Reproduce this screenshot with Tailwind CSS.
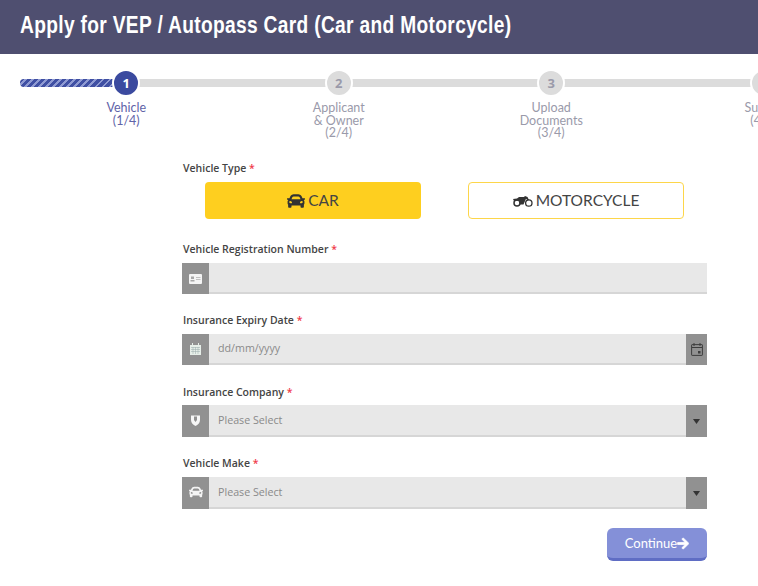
<!DOCTYPE html>
<html lang="en">
  <head>
    <meta charset="UTF-8" />
    <meta name="viewport" content="width=device-width, initial-scale=1.0" />
    <title>Apply for VEP / Autopass Card</title>
    <script src="https://cdn.jsdelivr.net/npm/@tailwindcss/browser@4"></script>
  </head>
  <body class="bg-white h-[586px] overflow-hidden font-['Open_Sans',sans-serif]">
    <!-- Title bar -->
    <header class="h-[54px] bg-[#4f4f70] pl-5 flex items-center">
      <h1 class="text-[23px] font-bold text-white whitespace-nowrap origin-left scale-x-[0.833] font-['Liberation_Sans',sans-serif] tracking-[0.4px] -mt-[4px]">Apply for VEP / Autopass Card (Car and Motorcycle)</h1>
    </header>

    <!-- Stepper -->
    <div class="relative ml-5 mt-[17px] w-[850px] h-[90px] font-['Lato',sans-serif] text-[12.5px] leading-[12.5px]">
      <div class="absolute left-0 right-0 top-[8px] h-2 rounded-full bg-[#dcdcdc]"></div>
      <div class="absolute left-0 top-[8px] w-[94px] h-2 rounded-l-full bg-[repeating-linear-gradient(135deg,#3f4fa3_0,#3f4fa3_3px,#8f9ad2_3px,#8f9ad2_5px)]"></div>
      <div class="relative grid grid-cols-4 text-center text-[#9a9aaa]">
        <div class="flex flex-col items-center text-[#5f63a8]">
          <span class="w-7 h-7 -mt-0.5 rounded-full border-2 border-white bg-[#3b4a9f] text-white text-[13px] font-bold font-['Open_Sans',sans-serif] flex items-center justify-center">1</span>
          <span class="mt-[5px]">Vehicle<br />(1/4)</span>
        </div>
        <div class="flex flex-col items-center">
          <span class="w-7 h-7 -mt-0.5 rounded-full border-2 border-white bg-[#dcdcdc] text-[#9a9aaa] text-[13px] font-bold font-['Open_Sans',sans-serif] flex items-center justify-center">2</span>
          <span class="mt-[5px]">Applicant<br />&amp; Owner<br />(2/4)</span>
        </div>
        <div class="flex flex-col items-center">
          <span class="w-7 h-7 -mt-0.5 rounded-full border-2 border-white bg-[#dcdcdc] text-[#9a9aaa] text-[13px] font-bold font-['Open_Sans',sans-serif] flex items-center justify-center">3</span>
          <span class="mt-[5px]">Upload<br />Documents<br />(3/4)</span>
        </div>
        <div class="flex flex-col items-center">
          <span class="w-7 h-7 -mt-0.5 rounded-full border-2 border-white bg-[#dcdcdc] text-[#9a9aaa] text-[13px] font-bold font-['Open_Sans',sans-serif] flex items-center justify-center">4</span>
          <span class="mt-[5px]">Submit<br />(4/4)</span>
        </div>
      </div>
    </div>

    <!-- Form -->
    <form class="ml-[182px] w-[525px]">
      <label class="block pl-px h-[14px] leading-[14px] text-[10.5px] font-semibold text-[#444]">Vehicle Type <span class="text-[#f03a4a]">*</span></label>
      <div class="mt-[7px] pl-[23px] flex gap-[47px] font-['Lato',sans-serif] text-[15.5px] text-[#444]">
        <button type="button" class="w-[216px] h-[37px] pt-px rounded bg-[#fecf1f] flex items-center justify-center gap-[3px]">
          <svg class="w-[18px] h-[18px] fill-[#333]" viewBox="0 0 512 512"><path d="M499.99 176h-59.87l-16.64-41.6C406.38 91.63 365.57 64 319.5 64h-127c-46.06 0-86.88 27.63-103.99 70.4L71.87 176H12.01C4.2 176-1.53 183.34.37 190.91l6 24C7.7 220.25 12.5 224 18.01 224h20.07C24.65 235.73 16 252.78 16 272v48c0 16.12 6.16 30.67 16 41.93V416c0 17.67 14.33 32 32 32h32c17.67 0 32-14.33 32-32v-32h256v32c0 17.67 14.33 32 32 32h32c17.67 0 32-14.33 32-32v-54.07c9.84-11.25 16-25.8 16-41.93v-48c0-19.22-8.65-36.27-22.07-48H494c5.51 0 10.31-3.75 11.64-9.09l6-24c1.89-7.57-3.84-14.91-11.65-14.91zm-352.06-17.83c7.29-18.22 24.94-30.17 44.57-30.17h127c19.63 0 37.28 11.95 44.57 30.17L384 208H128l19.93-49.83zM96 319.8c-19.2 0-32-12.76-32-31.9S76.8 256 96 256s48 28.71 48 47.85-28.8 15.95-48 15.95zm320 0c-19.2 0-48 3.19-48-15.95S396.8 256 416 256s32 12.76 32 31.9-12.8 31.9-32 31.9z"/></svg>
          CAR
        </button>
        <button type="button" class="w-[216px] h-[37px] pt-px rounded border border-[#fdd64a] bg-white flex items-center justify-center gap-[3px]">
          <svg class="w-[20px] h-[11px]" viewBox="0 0 20 11"><circle cx="4" cy="7" r="3" fill="none" stroke="#333" stroke-width="1.500"/><circle cx="15.800" cy="7" r="3.200" fill="none" stroke="#333" stroke-width="1.300"/><path d="M0 3 4 2.500 6 1h5l1-1 2.500 1 1.500 3-1.200.5L13 2.800 10.500 8.500H6.800L6 4.500 1 5z" fill="#333"/></svg>
          MOTORCYCLE
        </button>
      </div>

      <label class="block pl-px mt-[23px] h-[14px] leading-[14px] text-[10.5px] font-semibold text-[#444]">Vehicle Registration Number <span class="text-[#f03a4a]">*</span></label>
      <div class="mt-[7px] flex h-[31px] bg-[#e8e8e8] border-b-2 border-[#d6d6d6]">
        <span class="w-[27px] -mb-0.5 bg-[#919191] flex items-center justify-center">
          <svg class="w-[13px] h-[10px]" viewBox="0 0 13 10"><rect width="13" height="10" rx="1" fill="#f4f4f4"/><rect x="2" y="2.500" width="3" height="2.500" fill="#a8a8a8"/><rect x="1.500" y="6" width="4" height="1.500" fill="#a8a8a8"/><rect x="7" y="3" width="4.500" height="1" fill="#c0c0c0"/><rect x="7" y="5" width="4.500" height="1" fill="#c0c0c0"/></svg>
        </span>
        <input type="text" class="flex-1 px-[9px] bg-transparent outline-none text-[10.7px]" />
      </div>

      <label class="block pl-px mt-[19px] h-[14px] leading-[14px] text-[10.5px] font-semibold text-[#444]">Insurance Expiry Date <span class="text-[#f03a4a]">*</span></label>
      <div class="mt-[7px] flex h-[31px] bg-[#e8e8e8] border-b-2 border-[#d6d6d6]">
        <span class="w-[27px] -mb-0.5 bg-[#919191] flex items-center justify-center">
          <svg class="w-[11px] h-[12px] -mt-0.5" viewBox="0 0 11 12"><path d="M0 2h2V0h1v2h5V0h1v2h2v10H0z" fill="#e6eee8"/><path d="M1 4.500h9M1 6.500h9M1 8.500h9M3 4v7M5.500 4v7M8 4v7" stroke="#9aa" stroke-width=".5"/></svg>
        </span>
        <input type="text" placeholder="dd/mm/yyyy" class="flex-1 min-w-0 px-[9px] bg-transparent outline-none text-[10.7px] placeholder:text-[#8a8a8a]" />
        <span class="w-[21px] -mb-0.5 ml-auto bg-[#919191] flex items-center justify-center">
          <svg class="w-[12px] h-[13px]" viewBox="0 0 12 13"><rect x=".6" y="1.600" width="10.800" height="10.800" rx=".5" fill="none" stroke="#3d3d3d" stroke-width="1"/><path d="M1 4.500h10" stroke="#3d3d3d"/><path d="M3 0v3M9 0v3" stroke="#3d3d3d"/><rect x="7" y="8" width="2.500" height="2.500" fill="#3d3d3d"/></svg>
        </span>
      </div>

      <label class="block pl-px mt-[20px] h-[14px] leading-[14px] text-[10.5px] font-semibold text-[#444]">Insurance Company <span class="text-[#f03a4a]">*</span></label>
      <div class="mt-[6px] flex h-[32px] bg-[#e8e8e8] border-b-2 border-[#d6d6d6]">
        <span class="w-[27px] -mb-0.5 bg-[#919191] flex items-center justify-center">
          <svg class="w-[9px] h-[11px] -mt-0.5" viewBox="0 0 9 11"><path d="M0 .5h9v4.500C9 8 6.800 10 4.500 11 2.200 10 0 8 0 5z" fill="#f6f6f6"/><path d="M3 1.500h3v3.500L4.500 7 3 5z" fill="#919191"/></svg>
        </span>
        <span class="flex-1 px-[9px] pt-px flex items-center text-[10.7px] text-[#8a8a8a]">Please Select</span>
        <span class="w-[21px] -mb-0.5 bg-[#919191] flex items-center justify-center">
          <svg class="w-[7px] h-[5px]" viewBox="0 0 7 5"><path d="M0 0h7L3.500 5z" fill="#333"/></svg>
        </span>
      </div>

      <label class="block pl-px mt-[19px] h-[14px] leading-[14px] text-[10.5px] font-semibold text-[#444]">Vehicle Make <span class="text-[#f03a4a]">*</span></label>
      <div class="mt-[7px] flex h-[32px] bg-[#e8e8e8] border-b-2 border-[#d6d6d6]">
        <span class="w-[27px] -mb-0.5 bg-[#919191] flex items-center justify-center">
          <svg class="w-[14px] h-[14px] -mt-0.5 fill-[#f4f4f4]" viewBox="0 0 512 512"><path d="M499.99 176h-59.87l-16.64-41.6C406.38 91.63 365.57 64 319.5 64h-127c-46.06 0-86.88 27.63-103.99 70.4L71.87 176H12.01C4.2 176-1.53 183.34.37 190.91l6 24C7.7 220.25 12.5 224 18.01 224h20.07C24.65 235.73 16 252.78 16 272v48c0 16.12 6.16 30.67 16 41.93V416c0 17.67 14.33 32 32 32h32c17.67 0 32-14.33 32-32v-32h256v32c0 17.67 14.33 32 32 32h32c17.67 0 32-14.33 32-32v-54.07c9.84-11.25 16-25.8 16-41.93v-48c0-19.22-8.65-36.27-22.07-48H494c5.51 0 10.31-3.75 11.64-9.09l6-24c1.89-7.57-3.84-14.91-11.65-14.91zm-352.06-17.83c7.29-18.22 24.94-30.17 44.57-30.17h127c19.63 0 37.28 11.95 44.57 30.17L384 208H128l19.93-49.83zM96 319.8c-19.2 0-32-12.76-32-31.9S76.8 256 96 256s48 28.71 48 47.85-28.8 15.95-48 15.95zm320 0c-19.2 0-48 3.19-48-15.95S396.8 256 416 256s32 12.76 32 31.9-12.8 31.9-32 31.9z"/></svg>
        </span>
        <span class="flex-1 px-[9px] flex items-center text-[10.7px] text-[#8a8a8a]">Please Select</span>
        <span class="w-[21px] -mb-0.5 bg-[#919191] flex items-center justify-center">
          <svg class="w-[7px] h-[5px]" viewBox="0 0 7 5"><path d="M0 0h7L3.500 5z" fill="#333"/></svg>
        </span>
      </div>

      <div class="mt-[19px] flex justify-end">
        <button type="button" class="w-[100px] h-[33px] pt-px rounded-md bg-[#8490d8] border-b-[3px] border-[#5f6dc4] text-white text-[13px] font-['Lato',sans-serif] flex items-center justify-center">
          Continue
          <svg class="w-[12px] h-[13px] fill-white stroke-white stroke-[30px]" viewBox="0 0 448 512"><path d="M190.5 66.9l22.2-22.2c9.4-9.4 24.6-9.4 33.9 0L441 239c9.4 9.4 9.4 24.6 0 33.9L246.6 467.3c-9.4 9.4-24.6 9.4-33.9 0l-22.2-22.2c-9.5-9.5-9.3-25 .4-34.3L311.4 296H24c-13.3 0-24-10.7-24-24v-32c0-13.3 10.7-24 24-24h287.4L190.9 101.2c-9.8-9.3-10-24.8-.4-34.3z"/></svg>
        </button>
      </div>
    </form>
  </body>
</html>
